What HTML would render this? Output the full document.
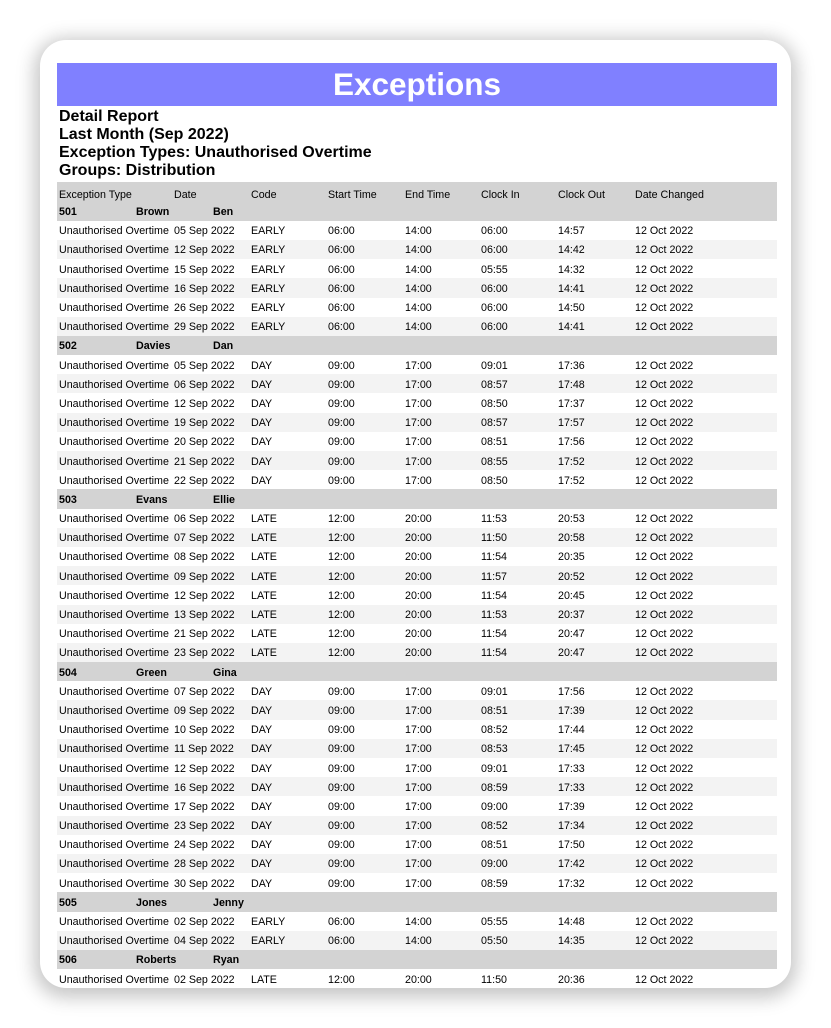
<!DOCTYPE html>
<html><head><meta charset="utf-8"><style>
body{margin:0;background:#fff;width:831px;height:1028px;overflow:hidden;font-family:"Liberation Sans",Arial,sans-serif;}
.card{position:absolute;left:40px;top:40px;width:751px;height:948px;background:#fff;border-radius:26px;box-shadow:0 4px 18px 6px rgba(0,0,0,0.22);overflow:hidden;}
.bar{position:absolute;left:17px;top:23px;width:720px;height:43px;background:#8080ff;color:#fff;font-weight:bold;font-size:31.5px;text-align:center;line-height:42px;}
.info{position:absolute;left:19px;top:67.5px;font-weight:bold;font-size:16px;line-height:18px;color:#000;}
.t{position:absolute;left:17px;top:142.4px;width:720px;font-size:10.7px;color:#000;}
.r{height:19.2px;line-height:19.2px;white-space:nowrap;overflow:hidden;position:relative;}
.r span{position:absolute;top:1.5px;}
.h{background:#d3d3d3;}
.h span{top:3.5px;}
.g{background:#d3d3d3;font-weight:bold;}
.a{background:#f3f3f3;}
</style></head><body>
<div class="card">
<div class="bar">Exceptions</div>
<div class="info">Detail Report<br>Last Month (Sep 2022)<br>Exception Types: Unauthorised Overtime<br>Groups: Distribution</div>
<div class="t" id="t"></div>
</div>
<script>
var X=[2,117,194,271,348,424,501,578];
var rows=[["h","Exception Type","Date","Code","Start Time","End Time","Clock In","Clock Out","Date Changed"]];
function g(a,b,c){rows.push(["g",a,b,c]);}
function d(list,code,st,et){list.forEach(function(x,i){rows.push([i%2?"a":"","Unauthorised Overtime",x[0]+" Sep 2022",code,st,et,x[1],x[2],"12 Oct 2022"]);});}
g("501","Brown","Ben");
d([["05","06:00","14:57"],["12","06:00","14:42"],["15","05:55","14:32"],["16","06:00","14:41"],["26","06:00","14:50"],["29","06:00","14:41"]],"EARLY","06:00","14:00");
g("502","Davies","Dan");
d([["05","09:01","17:36"],["06","08:57","17:48"],["12","08:50","17:37"],["19","08:57","17:57"],["20","08:51","17:56"],["21","08:55","17:52"],["22","08:50","17:52"]],"DAY","09:00","17:00");
g("503","Evans","Ellie");
d([["06","11:53","20:53"],["07","11:50","20:58"],["08","11:54","20:35"],["09","11:57","20:52"],["12","11:54","20:45"],["13","11:53","20:37"],["21","11:54","20:47"],["23","11:54","20:47"]],"LATE","12:00","20:00");
g("504","Green","Gina");
d([["07","09:01","17:56"],["09","08:51","17:39"],["10","08:52","17:44"],["11","08:53","17:45"],["12","09:01","17:33"],["16","08:59","17:33"],["17","09:00","17:39"],["23","08:52","17:34"],["24","08:51","17:50"],["28","09:00","17:42"],["30","08:59","17:32"]],"DAY","09:00","17:00");
g("505","Jones","Jenny");
d([["02","05:55","14:48"],["04","05:50","14:35"]],"EARLY","06:00","14:00");
g("506","Roberts","Ryan");
d([["02","11:50","20:36"]],"LATE","12:00","20:00");
var h="";
rows.forEach(function(r){h+='<div class="r '+r[0]+'">';var xs=r[0]=="g"?[2,79,156]:X;for(var i=1;i<r.length;i++)h+='<span style="left:'+xs[i-1]+'px">'+r[i]+'</span>';h+='</div>';});
document.getElementById("t").innerHTML=h;
</script>
</body></html>
